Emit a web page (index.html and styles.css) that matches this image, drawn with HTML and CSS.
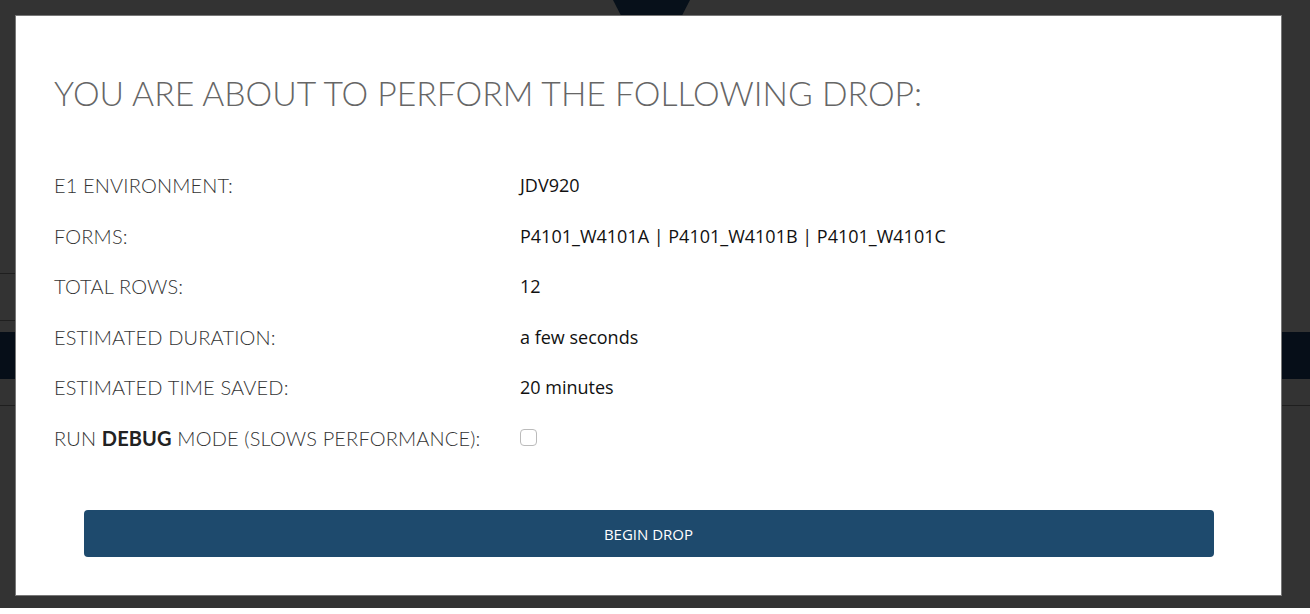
FILE: index.html
```html
<!DOCTYPE html>
<html lang="en">
<head>
<meta charset="UTF-8">
<meta name="viewport" content="width=device-width, initial-scale=1.0">
<title>Begin Drop</title>
<link rel="stylesheet" href="styles.css">
</head>
<body>

<div class="page">
    <div class="page-header">
        <div class="shield"></div>
    </div>
    <div class="page-rule half"></div>
    <div class="page-gap gap-46"></div>
    <div class="page-rule half"></div>
    <div class="page-gap gap-11"></div>
    <div class="page-band"></div>
    <div class="page-gap gap-26"></div>
    <div class="page-rule"></div>
    <div class="page-rest"></div>
</div>

<div class="modal">
    <h1 class="modal-title">You are about to perform the following drop:</h1>
    <div class="summary">
        <div class="summary-row">
            <div class="summary-label">E1 Environment:</div>
            <div class="summary-value">JDV920</div>
        </div>
        <div class="summary-row">
            <div class="summary-label">Forms:</div>
            <div class="summary-value">P4101_W4101A | P4101_W4101B | P4101_W4101C</div>
        </div>
        <div class="summary-row">
            <div class="summary-label">Total Rows:</div>
            <div class="summary-value">12</div>
        </div>
        <div class="summary-row">
            <div class="summary-label">Estimated Duration:</div>
            <div class="summary-value">a few seconds</div>
        </div>
        <div class="summary-row">
            <div class="summary-label">Estimated Time Saved:</div>
            <div class="summary-value">20 minutes</div>
        </div>
        <div class="summary-row">
            <label class="summary-label" for="debugMode">Run <b>Debug</b> Mode (Slows Performance):</label>
            <div class="summary-value"><input type="checkbox" id="debugMode"></div>
        </div>
    </div>
    <button type="button" class="begin-button">BEGIN DROP</button>
</div>

</body>
</html>
```

FILE: styles.css
```css
body {
    margin: 0;
    padding: 0;
    background-color: #333;
    font-family: "Lato", "Open Sans", sans-serif;
    position: relative;
    height: 614px;
    overflow: hidden;
}

/* page sitting behind the overlay */
.page {
    display: flex;
    flex-direction: column;
    height: 614px;
}

.page-header {
    height: 273px;
    position: relative;
}

.shield {
    position: absolute;
    top: 0;
    left: 613px;
    width: 77px;
    height: 15px;
    background-color: #07101a;
    clip-path: polygon(0 0, 100% 0, 90% 100%, 10% 100%);
}

.page-rule {
    height: 1px;
    background-color: #1f1f1f;
}

.page-rule.half {
    width: 50%;
}

.gap-46 { height: 46px; }
.gap-11 { height: 11px; }
.gap-26 { height: 26px; }

.page-band {
    height: 47px;
    background-color: #060e18;
}

.page-rest {
    flex: 1;
    border-bottom: 6px solid #fff;
}

/* modal */
.modal {
    position: absolute;
    top: 15px;
    left: 15px;
    width: 1267px;
    height: 581px;
    box-sizing: border-box;
    background-color: #fff;
    border: 1px solid #777;
    padding: 0 38px;
}

.modal-title {
    margin: 57px 0 0 0;
    font-size: 33.7px;
    font-weight: 300;
    color: #666;
    text-transform: uppercase;
    line-height: 40px;
}

.summary {
    margin-top: 47px;
}

.summary-row {
    display: flex;
    align-items: center;
    height: 50.5px;
}

.summary-label {
    width: 466px;
    font-size: 20px;
    font-weight: 300;
    letter-spacing: 0.15px;
    color: #333;
    text-transform: uppercase;
}

.summary-label b {
    font-weight: 700;
    color: #222;
}

.summary-value {
    font-family: "Open Sans", sans-serif;
    font-size: 18px;
    color: #111;
}

.summary-value input[type="checkbox"] {
    width: 17px;
    height: 17px;
    margin: 0;
    appearance: none;
    border: 1px solid #bbb;
    border-radius: 4px;
    display: block;
}

.begin-button {
    display: block;
    width: 1130px;
    height: 47px;
    margin: 47px auto 0;
    border: none;
    border-radius: 4px;
    background-color: #1e4a6d;
    color: #fff;
    font-family: "Open Sans", sans-serif;
    font-size: 15px;
    cursor: pointer;
}
```
